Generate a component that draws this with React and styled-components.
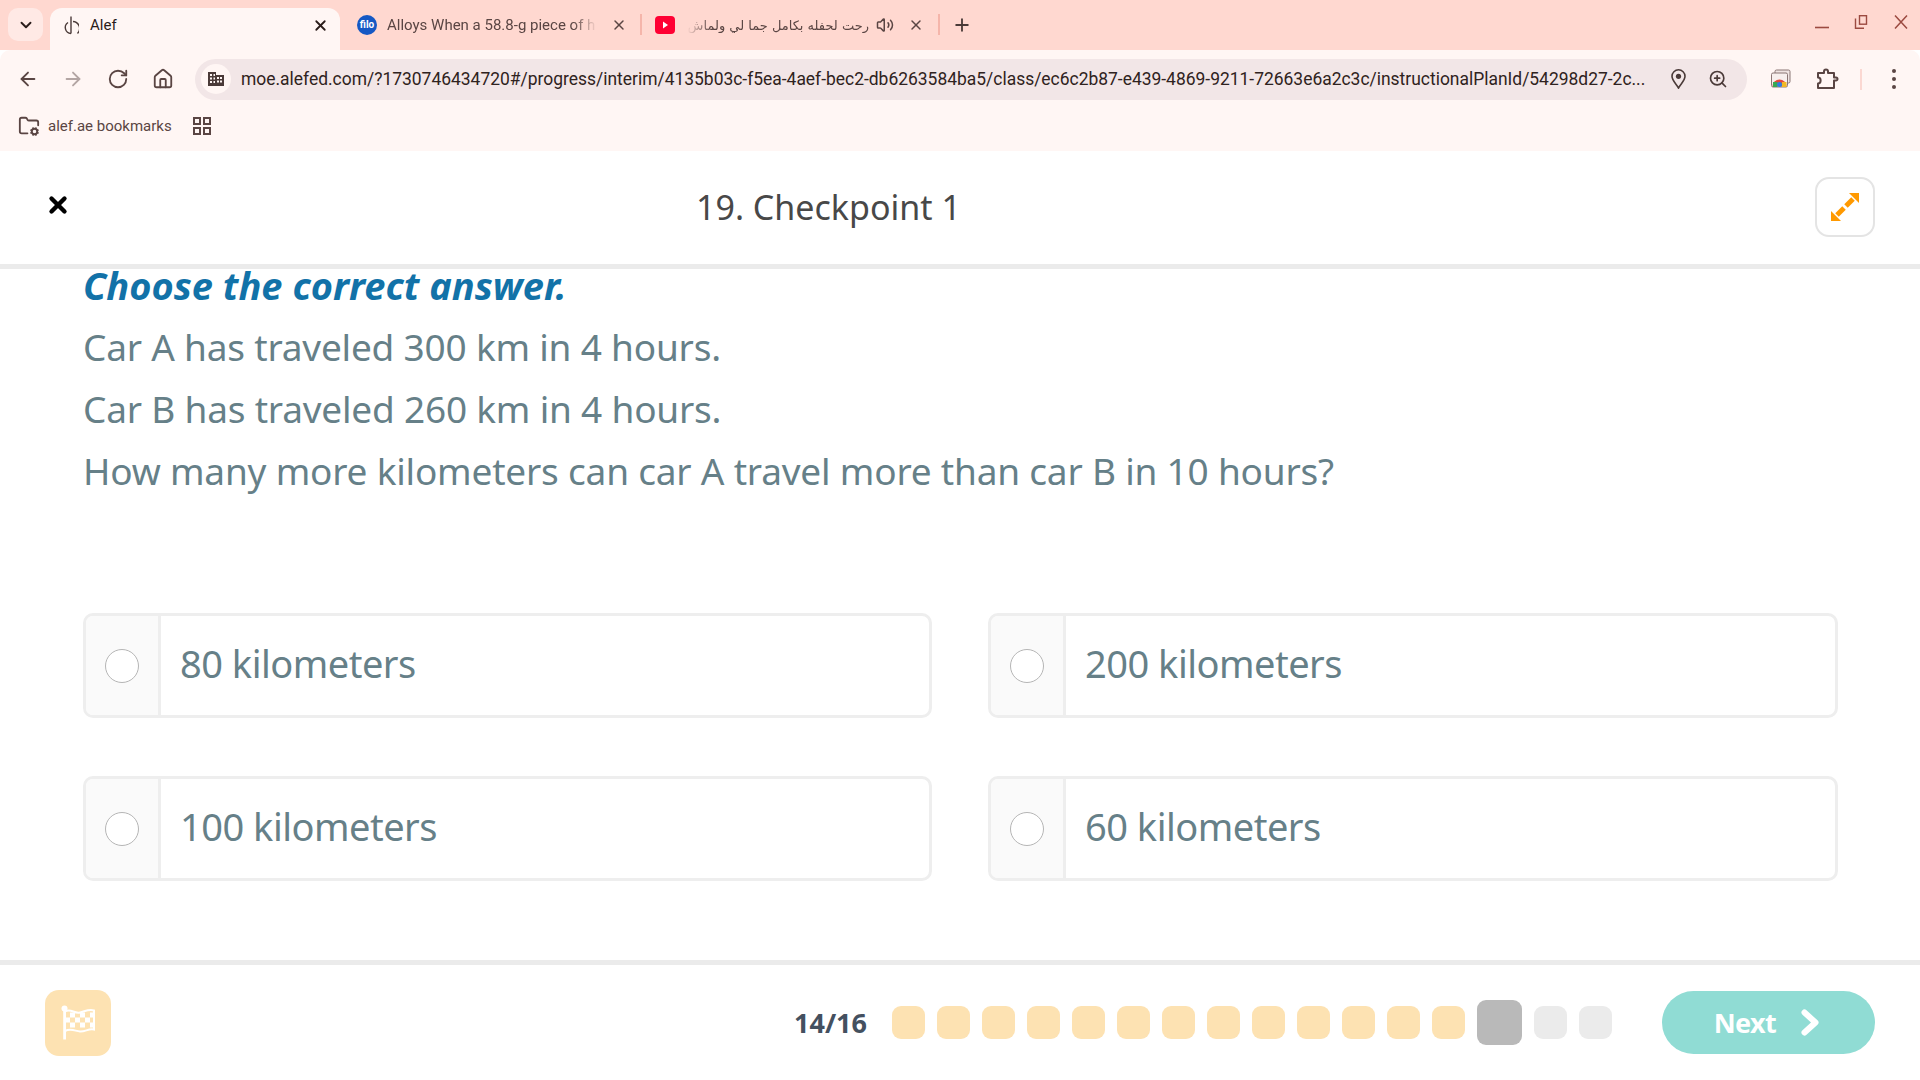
import React from 'react'
import styled, { createGlobalStyle } from 'styled-components'
import { ArrowLeft, ArrowRight, ChevronDown, FolderCog, House, Plus, RotateCw, Volume2, X, ZoomIn } from 'lucide-react'

const GlobalStyle = createGlobalStyle`
  html, body { margin: 0; padding: 0; background: #fff; }
  * { box-sizing: border-box; }
`

const Page = styled.div`
  width: 1920px;
  height: 1080px;
  overflow: hidden;
  display: flex;
  flex-direction: column;
  background: #fff;
  font-family: "Noto Sans", sans-serif;
`

const TabStrip = styled.div`
  height: 50px;
  flex: none;
  display: flex;
  align-items: flex-end;
  padding-left: 8px;
  background: #ffd8d0;
  font-family: Roboto, sans-serif;
  color: #4a3a38;
`

const TabMenu = styled.div`
  width: 35px;
  height: 33px;
  margin: 0 7px 9px 0;
  border-radius: 10px;
  background: #ffe9e5;
  display: flex;
  align-items: center;
  justify-content: center;
  color: #2a1c1a;
`

const Tab = styled.div`
  width: ${p => p.$width}px;
  height: 42px;
  flex: none;
  display: flex;
  align-items: center;
  padding: 0 ${p => p.$right}px 8px ${p => p.$left}px;
  margin-left: ${p => p.$gap || 0}px;
  border-radius: 12px 12px 0 0;
  background: ${p => (p.$active ? '#fff6f4' : 'transparent')};
  font-size: 15px;
  color: ${p => (p.$active ? '#2a1c1a' : '#5a4543')};
`

const TabTitle = styled.span`
  flex: 1;
  min-width: 0;
  margin-left: ${p => p.$gap}px;
  white-space: nowrap;
  mask-image: ${p => (p.$fade ? `linear-gradient(${p.$fade}, transparent, #000 24px)` : 'none')};
`

const RtlTitle = styled(TabTitle)`
  direction: rtl;
  font-family: "DejaVu Sans", sans-serif;
  font-size: 13px;
`

const TabClose = styled(X)`
  flex: none;
  margin-left: 14px;
`

const Speaker = styled(Volume2)`
  flex: none;
  margin-left: 7px;
`

const TabDivider = styled.div`
  width: 2px;
  height: 21px;
  margin-bottom: 15px;
  flex: none;
  background: #f5b5aa;
`

const NewTab = styled.div`
  margin: 0 0 15px 12px;
  display: flex;
  color: #4a3a38;
`

const WindowControls = styled.div`
  margin-left: auto;
  align-self: flex-start;
  display: flex;
  align-items: flex-start;
  gap: 23px;
  padding: 15px 10px 0 0;
  color: #9c4a40;
`

const Toolbar = styled.div`
  height: 50px;
  flex: none;
  display: flex;
  align-items: center;
  padding: 8px 0 0 17px;
  background: #fff6f4;
  border-radius: 10px 10px 0 0;
  color: #5a4543;
`

const NavGroup = styled.div`
  display: flex;
  align-items: center;
  gap: 23px;
  margin-right: 21px;
`

const Omnibox = styled.div`
  width: 1552px;
  height: 41px;
  flex: none;
  display: flex;
  align-items: center;
  padding: 0 19px 0 6px;
  border-radius: 21px;
  background: #f2e6e7;
`

const SiteBadge = styled.div`
  width: 30px;
  height: 30px;
  flex: none;
  margin-right: 10px;
  border-radius: 50%;
  background: #fff6f4;
  display: flex;
  align-items: center;
  justify-content: center;
`

const Url = styled.div`
  font-family: Roboto, sans-serif;
  font-size: 17.45px;
  color: #2f2220;
  white-space: nowrap;
`

const OmniIcons = styled.div`
  margin-left: auto;
  display: flex;
  align-items: center;
  gap: 22px;
  color: #4a3a38;
`

const ToolIcons = styled.div`
  display: flex;
  align-items: center;
  gap: 20px;
  margin-left: 23px;
  color: #5a4543;
`

const ToolDivider = styled.div`
  width: 2px;
  height: 21px;
  background: #fbd8d2;
`

const BookmarkBar = styled.div`
  height: 51px;
  flex: none;
  display: flex;
  align-items: center;
  padding: 0 0 0 18px;
  background: #fff6f4;
  font-family: Roboto, sans-serif;
  font-size: 15px;
  color: #5a4543;
`

const BookmarkLabel = styled.span`
  margin: 0 20px 0 8px;
`

const Header = styled.header`
  height: 118px;
  flex: none;
  display: flex;
  align-items: center;
  padding: 0 45px;
  border-bottom: 5px solid #ebebeb;
`

const CloseButton = styled.div`
  width: 651px;
  flex: none;
  display: flex;
  color: #000;
  margin-top: -6px;
`

const Title = styled.h1`
  margin: -1px 0 0;
  font-size: 34px;
  line-height: 52px;
  font-weight: 400;
  color: #484848;
  white-space: nowrap;
`

const ExpandButton = styled.div`
  width: 60px;
  height: 60px;
  margin: -2px 0 0 auto;
  border: 2px solid #e4e4e4;
  border-radius: 14px;
  display: flex;
  align-items: center;
  justify-content: center;
`

const Main = styled.main`
  flex: 1;
  padding: 0 83px;
`

const Prompt = styled.h2`
  margin: 0 0 15px;
  height: 32px;
  line-height: 32px;
  font-size: 38px;
  font-weight: 700;
  font-style: italic;
  color: #1272a8;
`

const QuestionLine = styled.p`
  margin: 0;
  height: 62px;
  line-height: 62px;
  font-size: 37px;
  letter-spacing: -0.2px;
  color: #668088;
  white-space: nowrap;
`

const Answers = styled.div`
  display: grid;
  grid-template-columns: 849px 850px;
  grid-auto-rows: 105px;
  column-gap: 56px;
  row-gap: 58px;
  margin-top: 111px;
`

const Answer = styled.div`
  display: flex;
  border: 3px solid #eeeeee;
  border-radius: 10px;
  overflow: hidden;
`

const RadioCell = styled.div`
  width: 75px;
  flex: none;
  display: flex;
  align-items: center;
  justify-content: center;
  background: #fafafa;
  border-right: 3px solid #eeeeee;
`

const Radio = styled.span`
  width: 34px;
  height: 34px;
  border-radius: 50%;
  border: 1px solid #b5b5b5;
  background: #fff;
`

const AnswerText = styled.div`
  display: flex;
  align-items: center;
  padding: 0 0 6px 19px;
  font-size: 38px;
  letter-spacing: -0.5px;
  color: #668088;
`

const Footer = styled.footer`
  height: 120px;
  flex: none;
  display: flex;
  align-items: center;
  padding: 0 45px;
  border-top: 5px solid #ebebeb;
`

const FlagButton = styled.div`
  width: 66px;
  height: 66px;
  border-radius: 14px;
  background: #fde2b2;
  display: flex;
  align-items: center;
  justify-content: center;
`

const Counter = styled.div`
  margin: 0 25px 0 auto;
  font-size: 27px;
  font-weight: 700;
  color: #44505f;
`

const Steps = styled.div`
  display: flex;
  align-items: center;
  gap: 12px;
  margin-right: 50px;
`

const Step = styled.span`
  width: ${p => (p.$kind === 'current' ? 45 : 33)}px;
  height: ${p => (p.$kind === 'current' ? 45 : 33)}px;
  border-radius: 9px;
  background: ${p => ({ done: '#fde2b2', current: '#b9b9b9', todo: '#ebebeb' })[p.$kind]};
`

const NextButton = styled.div`
  width: 213px;
  height: 63px;
  padding-right: 4px;
  border-radius: 32px;
  background: #90dcd4;
  display: flex;
  align-items: center;
  justify-content: center;
  gap: 25px;
  color: #fff;
  font-size: 27px;
  font-weight: 700;
  letter-spacing: -0.6px;
`

const FiloIcon = styled.span`
  width: 20px;
  height: 20px;
  flex: none;
  border-radius: 50%;
  background: #1558c4;
  color: #fff;
  font: 700 10px/20px Roboto, sans-serif;
  text-align: center;
`

const AlefIcon = () => (
  <svg width="16" height="20" viewBox="0 0 16 20" fill="none" stroke="#4a3a38" strokeWidth="1.4">
    <path d="M5 7.500A6 6 0 0 0 8 18.500" />
    <path d="M8 1.500V18.500" />
    <path d="M10 6.500A7 7 0 0 1 14.500 18.500" />
  </svg>
)

const YoutubeIcon = () => (
  <svg width="20" height="18" viewBox="0 0 20 18" style={{ flex: 'none' }}>
    <rect width="20" height="18" rx="4" fill="#ff0033" />
    <path d="M8 5.500 13 9 8 12.500Z" fill="#fff" />
  </svg>
)

const MinimizeIcon = () => (
  <svg width="16" height="14" viewBox="0 0 16 14" fill="none" stroke="currentColor" strokeWidth="1.6">
    <path d="M1 12.500H15" />
  </svg>
)

const RestoreIcon = () => (
  <svg width="16" height="14" viewBox="0 0 16 14" fill="none" stroke="currentColor" strokeWidth="1.4">
    <rect x="6.500" y="0.700" width="7" height="8.500" />
    <path d="M2.500 3.500V13.200H11" />
  </svg>
)

const WindowCloseIcon = () => (
  <svg width="18" height="14" viewBox="0 0 18 14" fill="none" stroke="currentColor" strokeWidth="1.5">
    <path d="M3 0.500 15 13.500M15 0.500 3 13.500" />
  </svg>
)

const SiteIcon = () => (
  <svg width="18" height="16" viewBox="0 0 18 16" fill="#4a3a38">
    <path d="M1 1H9V4H17V15H1ZM3 3V5H5V3ZM6.500 3V5H8V3ZM3 6.500V8.500H5V6.500ZM6.500 6.500V8.500H8V6.500ZM3 10V12H5V10ZM6.500 10V12H8V10ZM10 6V8H12V6ZM13 6V8H15V6ZM10 9.500V11.500H12V9.500ZM13 9.500V11.500H15V9.500Z" fillRule="evenodd" />
  </svg>
)

const PinIcon = () => (
  <svg width="15" height="20" viewBox="0 0 15 20" fill="none" stroke="currentColor" strokeWidth="1.6">
    <path d="M7.500 19C5 14.500 1 11.500 1 7.300A6.500 6.500 0 0 1 14 7.300C14 11.500 10 14.500 7.500 19Z" />
    <circle cx="7.500" cy="7.300" r="2.600" fill="currentColor" stroke="none" />
  </svg>
)

const ExtensionIcon = () => (
  <svg width="26" height="20" viewBox="0 0 26 20" fill="none">
    <rect x="5" y="1" width="15" height="13" rx="1.500" fill="#efe4e2" stroke="#8a7674" />
    <rect x="1.500" y="4" width="16" height="14" rx="1.500" fill="#f7efed" stroke="#8a7674" />
    <path d="M2.500 17.500A7 7 0 0 1 16.500 17.500Z" fill="#e5483a" />
    <rect x="3" y="13" width="4.500" height="5" fill="#38a854" />
    <rect x="12" y="13" width="4.500" height="5" fill="#f2b824" />
    <circle cx="9.500" cy="15.500" r="2.500" fill="#2f7fe0" />
  </svg>
)

const PuzzleIcon = () => (
  <svg width="24" height="22" viewBox="0 0 24 22" fill="none" stroke="currentColor" strokeWidth="2" strokeLinejoin="round">
    <path d="M2 5H8V3.500A2 2 0 0 1 12 3.500V5H18V9.500H20A1.500 1.500 0 0 1 20 12.500H18V20H2V15.500C5.500 15.500 5.500 9.500 2 9.500Z" />
  </svg>
)

const MenuDotsIcon = () => (
  <svg width="24" height="22" viewBox="0 0 24 22" fill="currentColor">
    <circle cx="12" cy="3" r="2" />
    <circle cx="12" cy="11" r="2" />
    <circle cx="12" cy="19" r="2" />
  </svg>
)

const GridIcon = () => (
  <svg width="20" height="20" viewBox="0 0 20 20" fill="none" stroke="currentColor" strokeWidth="2">
    <rect x="2" y="2" width="6" height="6" />
    <rect x="12" y="2" width="6" height="6" />
    <rect x="2" y="12" width="6" height="6" />
    <rect x="12" y="12" width="6" height="6" />
  </svg>
)

const ExpandIcon = () => (
  <svg width="28" height="28" viewBox="0 0 28 28" fill="#ff9900">
    <path d="M18 0H28V10Z" />
    <path d="M0 28V18L10 28Z" />
    <path d="M15 13 22 6" stroke="#ff9900" strokeWidth="5" />
    <path d="M13 15 6 22" stroke="#ff9900" strokeWidth="5" />
  </svg>
)

const FlagIcon = () => (
  <svg width="36" height="36" viewBox="0 0 36 36">
    <circle cx="4.500" cy="3.500" r="3" fill="#fff" />
    <path d="M3.200 4V34.500H6V4Z" fill="#fff" />
    <path d="M5 6.500C11 3 14 9 20 7.500S29 4 34 5.500V24.500C29 23 25 27 20 26.500S11 23 5 26" fill="none" stroke="#fff" strokeWidth="2" />
    <g fill="#fff">
      <rect x="10" y="7.500" width="5" height="5" />
      <rect x="20" y="7.500" width="5" height="5" />
      <rect x="5" y="12.500" width="5" height="5" />
      <rect x="15" y="12.500" width="5" height="5" />
      <rect x="25" y="12.500" width="5" height="5" />
      <rect x="10" y="17.500" width="5" height="5" />
      <rect x="20" y="17.500" width="5" height="5" />
      <rect x="30" y="17.500" width="3" height="5" />
      <rect x="30" y="7.500" width="3" height="5" />
    </g>
  </svg>
)

const NextChevron = () => (
  <svg width="18" height="27" viewBox="0 0 18 27" fill="none" stroke="#fff" strokeWidth="6" strokeLinecap="round" strokeLinejoin="round">
    <path d="M3.500 3.500 14.500 13.500 3.500 23.500" />
  </svg>
)

const answers = ['80 kilometers', '200 kilometers', '100 kilometers', '60 kilometers']

const steps = [...Array(13).fill('done'), 'current', 'todo', 'todo']

export default function App() {
  return (
    <Page>
      <GlobalStyle />
      <TabStrip>
        <TabMenu><ChevronDown size={18} strokeWidth={2.5} /></TabMenu>
        <Tab $active $width={290} $left={13} $right={11}>
          <AlefIcon />
          <TabTitle $gap={11}>Alef</TabTitle>
          <X size={17} strokeWidth={2.5} />
        </Tab>
        <Tab $width={296} $left={13} $right={13} $gap={4}>
          <FiloIcon>filo</FiloIcon>
          <TabTitle $gap={10} $fade="to left">Alloys When a 58.8-g piece of h</TabTitle>
          <TabClose size={16} strokeWidth={2.2} />
        </Tab>
        <TabDivider />
        <Tab $width={296} $left={13} $right={14}>
          <YoutubeIcon />
          <RtlTitle $gap={12} $fade="to right">رحت لحفله بكامل جما لي ولماش</RtlTitle>
          <Speaker size={18} />
          <TabClose size={16} strokeWidth={2.2} />
        </Tab>
        <TabDivider />
        <NewTab><Plus size={20} strokeWidth={2.2} /></NewTab>
        <WindowControls>
          <MinimizeIcon />
          <RestoreIcon />
          <WindowCloseIcon />
        </WindowControls>
      </TabStrip>

      <Toolbar>
        <NavGroup>
          <ArrowLeft size={22} />
          <ArrowRight size={22} color="#b3a5a3" />
          <RotateCw size={22} />
          <House size={22} />
        </NavGroup>
        <Omnibox>
          <SiteBadge><SiteIcon /></SiteBadge>
          <Url>moe.alefed.com/?1730746434720#/progress/interim/4135b03c-f5ea-4aef-bec2-db6263584ba5/class/ec6c2b87-e439-4869-9211-72663e6a2c3c/instructionalPlanId/54298d27-2c...</Url>
          <OmniIcons>
            <PinIcon />
            <ZoomIn size={20} />
          </OmniIcons>
        </Omnibox>
        <ToolIcons>
          <ExtensionIcon />
          <PuzzleIcon />
          <ToolDivider />
          <MenuDotsIcon />
        </ToolIcons>
      </Toolbar>

      <BookmarkBar>
        <FolderCog size={22} />
        <BookmarkLabel>alef.ae bookmarks</BookmarkLabel>
        <GridIcon />
      </BookmarkBar>

      <Header>
        <CloseButton><X size={26} strokeWidth={4} /></CloseButton>
        <Title>19. Checkpoint 1</Title>
        <ExpandButton><ExpandIcon /></ExpandButton>
      </Header>

      <Main>
        <Prompt>Choose the correct answer.</Prompt>
        <QuestionLine>Car A has traveled 300 km in 4 hours.</QuestionLine>
        <QuestionLine>Car B has traveled 260 km in 4 hours.</QuestionLine>
        <QuestionLine>How many more kilometers can car A travel more than car B in 10 hours?</QuestionLine>
        <Answers>
          {answers.map(answer => (
            <Answer key={answer}>
              <RadioCell><Radio /></RadioCell>
              <AnswerText>{answer}</AnswerText>
            </Answer>
          ))}
        </Answers>
      </Main>

      <Footer>
        <FlagButton><FlagIcon /></FlagButton>
        <Counter>14/16</Counter>
        <Steps>
          {steps.map((kind, i) => <Step key={i} $kind={kind} />)}
        </Steps>
        <NextButton>Next<NextChevron /></NextButton>
      </Footer>
    </Page>
  )
}
